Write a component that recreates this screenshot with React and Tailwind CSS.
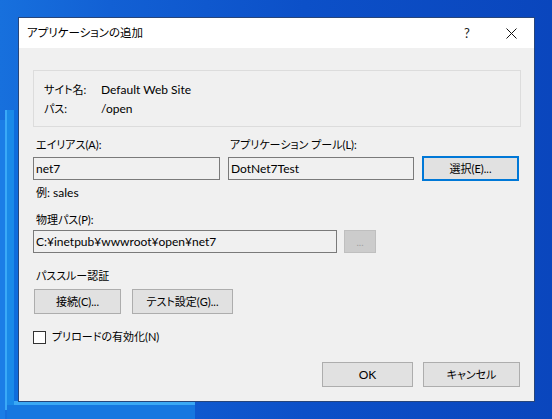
import React from "react";

function J({ children }) {
  return <span className="text-[11px]">{children}</span>;
}

function Btn({ children, className = "" }) {
  return (
    <div
      className={
        "flex items-center justify-center bg-[#e1e1e1] border border-[#adadad] text-black " +
        className
      }
    >
      {children}
    </div>
  );
}

export default function App() {
  return (
    <div className="relative w-[552px] h-[419px] overflow-hidden bg-[linear-gradient(90deg,#1770dd_0%,#1260d4_20%,#0c50c8_55%,#0a46bd_100%)] font-['Lato','Noto_Sans_CJK_JP',sans-serif] [font-feature-settings:'palt'] text-[12px] leading-[16px] text-black">
      {/* wallpaper light beams */}
      <div className="absolute left-0 top-[120px] w-[5px] h-[300px] bg-[#1b7de6]" />
      <div className="absolute left-[5px] top-[110px] w-[2px] h-[300px] bg-[#3aa9f7]" />
      <div className="absolute left-[7px] top-[110px] w-[7px] h-[300px] bg-[#1a8ae8]" />
      <div className="absolute left-[14px] top-[110px] w-[4px] h-[300px] bg-[#0f6cdc]" />
      <div className="absolute left-[14px] top-[401px] w-[181px] h-[4px] bg-[#3aa8f5]" />
      <div className="absolute left-[7px] top-[405px] w-[188px] h-[14px] bg-[#1677e0]" />

      <div className="relative pl-[18px] pt-[17px]">
        <div className="w-[517px] h-[385px] border border-[#27457a] bg-[#f0f0f0] flex flex-col">
          {/* title bar */}
          <div className="h-[30px] bg-white flex items-center pl-[8px] shrink-0">
            <span className="flex-1 text-[11.5px]">アプリケーションの追加</span>
            <span className="w-[10px] text-center mr-[34px] text-[13px] text-[#222]">?</span>
            <svg width="11" height="11" viewBox="0 0 11 11" className="mr-[17px]">
              <path d="M0.5 0.5 L10.5 10.5 M10.5 0.5 L0.5 10.5" stroke="#111" strokeWidth="1" fill="none" />
            </svg>
          </div>

          {/* body */}
          <div className="flex-1 flex flex-col pl-[14px] pr-[13px]">
            {/* group */}
            <div className="mt-[22px] h-[57px] border border-[#dcdcdc] pl-[10px] pt-[9px] flex flex-col">
              <div className="flex h-[19px] items-center">
                <span className="w-[57px]"><J>サイト名:</J></span>
                <span>Default Web Site</span>
              </div>
              <div className="flex h-[19px] items-center">
                <span className="w-[57px]"><J>パス:</J></span>
                <span>/open</span>
              </div>
            </div>

            {/* alias / pool */}
            <div className="mt-[10px] flex h-[16px] items-center">
              <div className="w-[187px] pl-[3px]"><J>エイリアス(A):</J></div>
              <div className="ml-[8px] pl-[2px]"><J>アプリケーション プール(L):</J></div>
            </div>
            <div className="mt-[3px] flex items-center">
              <div className="w-[187px] h-[23px] border border-[#7a7a7a] bg-[#f0f0f0] pl-[2px] flex items-center">
                net7
              </div>
              <div className="ml-[8px] w-[186px] h-[23px] border border-[#7a7a7a] bg-[#f0f0f0] pl-[2px] flex items-center">
                DotNet7Test
              </div>
              <div className="ml-[8px] w-[97px] h-[25px] border-2 border-[#0078d7] bg-[#e1e1e1] flex items-center justify-center">
                <J>選択(E)...</J>
              </div>
            </div>
            <div className="mt-[4px] pl-[3px] h-[16px] flex items-center">
              <J>例</J>: sales
            </div>

            <div className="mt-[11px] pl-[3px] h-[16px] flex items-center"><J>物理パス(P):</J></div>
            <div className="mt-[2px] flex">
              <div className="w-[304px] h-[23px] border border-[#7a7a7a] bg-[#f0f0f0] pl-[2px] flex items-center">
                C:¥inetpub¥wwwroot¥open¥net7
              </div>
              <div className="ml-[7px] w-[32px] h-[23px] border border-[#bfbfbf] bg-[#cccccc] flex items-center justify-center text-[#a0a0a0] text-[10px]">
                ...
              </div>
            </div>

            <div className="mt-[15px] pl-[3px] h-[16px] flex items-center"><J>パススルー認証</J></div>
            <div className="mt-[5px] flex pl-[1px]">
              <Btn className="w-[87px] h-[25px]"><J>接続(C)...</J></Btn>
              <Btn className="ml-[11px] w-[101px] h-[25px]"><J>テスト設定(G)...</J></Btn>
            </div>

            <div className="mt-[15px] flex items-center">
              <div className="w-[13px] h-[13px] border border-[#333] bg-white" />
              <span className="ml-[6px]"><J>プリロードの有効化(N)</J></span>
            </div>

            <div className="mt-auto mb-[14px] flex justify-end pr-[1px]">
              <Btn className="w-[91px] h-[25px]">OK</Btn>
              <Btn className="ml-[10px] w-[97px] h-[25px]"><J>キャンセル</J></Btn>
            </div>
          </div>
        </div>
      </div>
    </div>
  );
}
